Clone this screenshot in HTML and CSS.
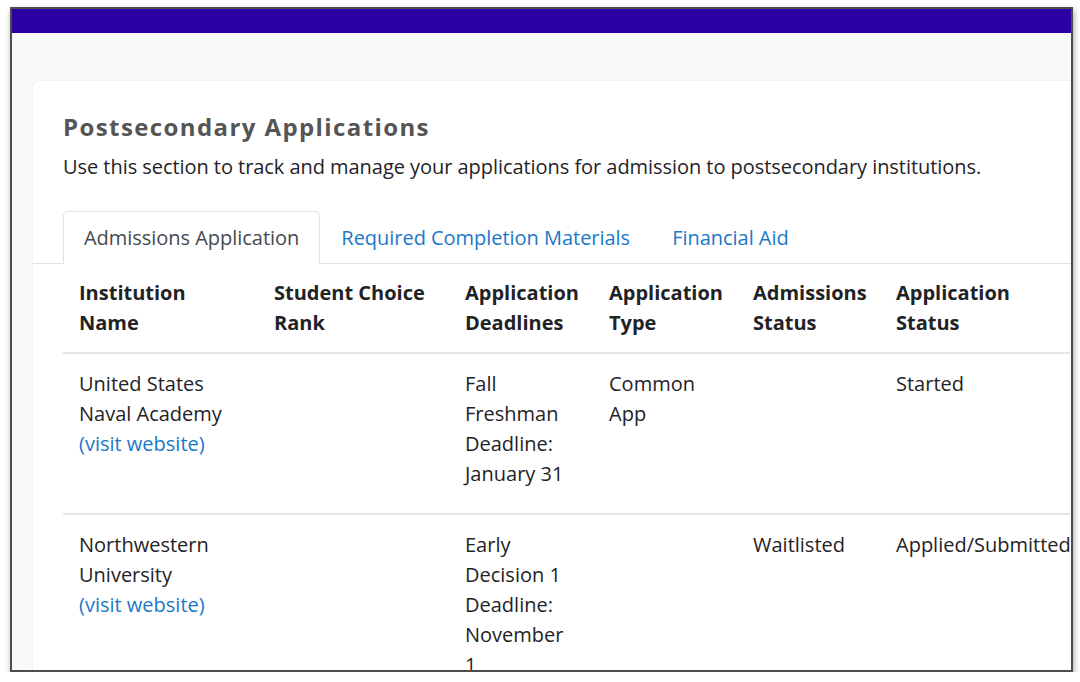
FILE: index.html
```html
<!DOCTYPE html>
<html lang="en">
<head>
<meta charset="UTF-8" />
<meta name="viewport" content="width=device-width, initial-scale=1.0" />
<title>Postsecondary Applications</title>
<link rel="stylesheet" href="styles.css">
</head>

<body>
    <div class="window">
        <div class="top-bar"></div>

        <main class="page">
            <section class="card">
                <h2 class="card-title">Postsecondary Applications</h2>
                <p class="card-intro">Use this section to track and manage your applications for admission to postsecondary institutions.</p>

                <nav class="tabs">
                    <a class="tab active" href="#">Admissions Application</a>
                    <a class="tab" href="#">Required Completion Materials</a>
                    <a class="tab" href="#">Financial Aid</a>
                </nav>

                <table class="apps">
                    <colgroup>
                        <col class="col-name">
                        <col class="col-rank">
                        <col class="col-deadline">
                        <col class="col-type">
                        <col class="col-admit">
                        <col class="col-status">
                    </colgroup>
                    <thead>
                        <tr>
                            <th>Institution Name</th>
                            <th>Student Choice Rank</th>
                            <th>Application Deadlines</th>
                            <th>Application Type</th>
                            <th>Admissions Status</th>
                            <th>Application Status</th>
                        </tr>
                    </thead>
                    <tbody>
                        <tr>
                            <td>United States Naval Academy<br><a href="#">(visit website)</a></td>
                            <td></td>
                            <td>Fall Freshman Deadline: January 31</td>
                            <td>Common App</td>
                            <td></td>
                            <td>Started</td>
                        </tr>
                        <tr>
                            <td>Northwestern University<br><a href="#">(visit website)</a></td>
                            <td></td>
                            <td>Early Decision 1 Deadline: November 1</td>
                            <td></td>
                            <td>Waitlisted</td>
                            <td>Applied/Submitted</td>
                        </tr>
                    </tbody>
                </table>
            </section>
        </main>
    </div>
</body>
</html>
```

FILE: styles.css
```css
body {
    margin: 0;
    padding: 7px 0 0 10px;
    background: #ffffff;
    font-family: "Open Sans", "Liberation Sans", sans-serif;
    color: #1f2326;
}

/* Browser window frame */
.window {
    box-sizing: border-box;
    width: 1063px;
    height: 665px;
    border: 2px solid #4d4d4d;
    box-shadow: 1px 3px 6px rgba(0, 0, 0, 0.35);
    overflow: hidden;
    display: flex;
    flex-direction: column;
}

.top-bar {
    height: 24px;
    flex: none;
    background: #2a00a2;
    box-shadow: 0 1px 3px rgba(0, 0, 0, 0.15);
}

.page {
    flex: 1;
    background: #f8f9fb;
    padding: 48px 0 0 21px;
}

.card {
    width: 1100px;
    min-height: 700px;
    background: #ffffff;
    border-radius: 6px;
    box-shadow: 0 0 3px rgba(0, 0, 0, 0.08);
    padding: 30px 0 0 30px;
}

.card-title {
    margin: 0;
    font-family: "Open Sans", sans-serif;
    font-weight: 700;
    font-size: 24px;
    line-height: 32px;
    letter-spacing: 1.4px;
    color: #555555;
}

.card-intro {
    margin: 10px 0 0;
    font-size: 20px;
    line-height: 28px;
    letter-spacing: -0.05px;
}

/* Tab strip */
.tabs {
    display: flex;
    margin: 30px 0 0 -30px;
    padding-left: 30px;
    border-bottom: 1px solid #dee2e6;
}

.tab {
    display: block;
    padding: 12px 20px 11px;
    margin-bottom: -1px;
    font-size: 20px;
    line-height: 28px;
    letter-spacing: -0.03px;
    color: #1b78c8;
    text-decoration: none;
    border: 1px solid transparent;
    border-radius: 5px 5px 0 0;
}

.tab.active {
    color: #444a50;
    background: #ffffff;
    border-color: #dee2e6 #dee2e6 #ffffff;
}

/* Applications table */
.apps {
    width: 1007px;
    border-collapse: collapse;
    table-layout: fixed;
    font-size: 20px;
    line-height: 30px;
}

.col-name { width: 195px; }
.col-rank { width: 191px; }
.col-deadline { width: 144px; }
.col-type { width: 144px; }
.col-admit { width: 143px; }
.col-status { width: 190px; }

.apps th {
    text-align: left;
    vertical-align: top;
    font-weight: 700;
    padding: 14px 16px 14px;
    border-bottom: 2px solid #e4e6eb;
}

.apps td {
    vertical-align: top;
    padding: 15px 16px 24px;
    border-bottom: 2px solid #e4e6eb;
}

.apps td:last-child {
    white-space: nowrap;
}

.apps a {
    color: #1b78c8;
    text-decoration: none;
}
```
